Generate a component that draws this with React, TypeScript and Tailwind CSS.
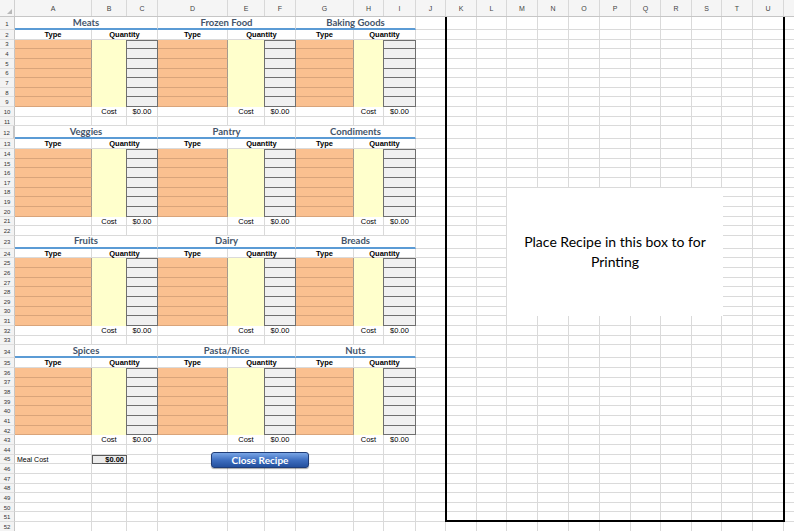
import { clsx } from 'clsx';

type Block = { a: string; b: string; c: string; bc: string; all: string };

const BLOCKS: Block[] = [
  { a: 'w-[77px]', b: 'w-[35px]', c: 'w-[31px]', bc: 'w-[66px]', all: 'w-[143px]' },
  { a: 'w-[70px]', b: 'w-[37px]', c: 'w-[31px]', bc: 'w-[68px]', all: 'w-[138px]' },
  { a: 'w-[58px]', b: 'w-[30px]', c: 'w-[32px]', bc: 'w-[62px]', all: 'w-[120px]' },
];

const LEFT_COLS: [string, string][] = [
  ['A', 'w-[77px]'], ['B', 'w-[35px]'], ['C', 'w-[31px]'],
  ['D', 'w-[70px]'], ['E', 'w-[37px]'], ['F', 'w-[31px]'],
  ['G', 'w-[58px]'], ['H', 'w-[30px]'], ['I', 'w-[32px]'],
];

const RIGHT_COLS: [string, string][] = [
  ['J', 'w-[30px]'], ['K', 'w-[31px]'], ['L', 'w-[30px]'], ['M', 'w-[31px]'],
  ['N', 'w-[31px]'], ['O', 'w-[31px]'], ['P', 'w-[31px]'], ['Q', 'w-[30px]'],
  ['R', 'w-[31px]'], ['S', 'w-[30px]'], ['T', 'w-[31px]'], ['U', 'w-[31px]'],
  ['', 'w-[30px]'],
];

const NAMES = [
  ['Meats', 'Frozen Food', 'Baking Goods'],
  ['Veggies', 'Pantry', 'Condiments'],
  ['Fruits', 'Dairy', 'Breads'],
  ['Spices', 'Pasta/Rice', 'Nuts'],
];

const grid = 'shrink-0 h-full border-r border-b border-[#dadada]';
const center = 'flex items-center justify-center leading-none pt-px';

function BlockCells({ block, kind, name, first }: { block: Block; kind: string; name: string; first: boolean }) {
  if (kind === 'title') {
    return (
      <div className={clsx(block.all, 'shrink-0 h-full flex items-end justify-center pb-px leading-none border-r border-r-[#dadada] border-b-2 border-b-[#5b9bd5] font-["Lato"] font-bold text-[9.5px] text-[#44546a]')}>
        {name}
      </div>
    );
  }
  if (kind === 'sub') {
    return (
      <>
        <div className={clsx(block.a, grid, center, 'font-bold text-[7.5px] text-black')}>Type</div>
        <div className={clsx(block.bc, grid, center, 'font-bold text-[7.5px] text-black')}>Quantity</div>
      </>
    );
  }
  if (kind === 'data') {
    return (
      <>
        <div className={clsx(block.a, 'shrink-0 h-full bg-[#fac090] border-r border-r-[#a59a8e] border-b border-b-[#d9a47a]')} />
        <div className={clsx(block.b, 'shrink-0 h-full bg-[#ffffcc] border-r border-r-[#6f6f6f]')} />
        <div className={clsx(block.c, 'shrink-0 h-full bg-[#f0f0f0] border-r border-b border-[#6f6f6f]', first && 'border-t')} />
      </>
    );
  }
  if (kind === 'cost') {
    return (
      <>
        <div className={clsx(block.a, grid)} />
        <div className={clsx(block.b, grid, center, 'text-[7.5px] text-black')}>Cost</div>
        <div className={clsx(block.c, grid, center, 'text-[7.5px] text-black')}>$0.00</div>
      </>
    );
  }
  return (
    <>
      <div className={clsx(block.a, grid)} />
      <div className={clsx(block.b, grid)} />
      <div className={clsx(block.c, grid)} />
    </>
  );
}

function SheetRow({ r }: { r: number }) {
  const inBlocks = r <= 44;
  const offset = (r - 1) % 11;
  const kind = !inBlocks ? 'blank'
    : offset === 0 ? 'title'
    : offset === 1 ? 'sub'
    : offset <= 8 ? 'data'
    : offset === 9 ? 'cost' : 'blank';
  const names = inBlocks ? NAMES[Math.floor((r - 1) / 11)] : ['', '', ''];

  return (
    <div className={clsx('flex', kind === 'title' ? 'h-[13px]' : 'h-[9.65px]')}>
      <div className={clsx(
        'w-[15px] shrink-0 h-full bg-[#f3f3f3] border-r border-b border-r-[#c6c6c6] border-b-[#dedede] flex items-center justify-center pt-px text-[6px] leading-none text-[#333]',
        r === 12 && 'bg-[#e2e2e2] border-r-2 border-r-[#217346]'
      )}>
        {r}
      </div>
      {r === 45 ? (
        <>
          <div className={clsx('w-[77px]', grid, 'flex items-center pl-[2px] pt-px text-[7px] leading-none text-black')}>Meal Cost</div>
          <div className="w-[35px] shrink-0 h-full bg-[#ececec] border border-[#5a5a5a] flex items-center justify-end pr-[2px] pt-px font-bold text-[7.5px] leading-none text-black">
            $0.00
          </div>
          {LEFT_COLS.slice(2).map(([k, w]) => <div key={k} className={clsx(w, grid)} />)}
        </>
      ) : (
        BLOCKS.map((block, i) => (
          <BlockCells key={i} block={block} kind={kind} name={names[i]} first={offset === 2} />
        ))
      )}
      {RIGHT_COLS.map(([k, w], i) => <div key={i} className={clsx(w, grid)} />)}
    </div>
  );
}

export default function App() {
  const rows = Array.from({ length: 52 }, (_, i) => i + 1);

  return (
    <div className="relative w-[794px] h-[531px] overflow-hidden bg-white font-['Liberation_Sans',Arial,sans-serif]">
      <div className="flex h-[17px] bg-[#f5f5f5] border-b border-[#c6c6c6]">
        <div className="relative w-[15px] shrink-0 h-full border-r border-[#d0d0d0]">
          <div className="absolute right-[2px] bottom-[2px] w-0 h-0 border-l-[5px] border-l-transparent border-b-[5px] border-b-[#b8b8b8]" />
        </div>
        {[...LEFT_COLS, ...RIGHT_COLS].map(([k, w], i) => (
          <div key={i} className={clsx(w, 'shrink-0 h-full border-r border-[#d8d8d8] flex items-center justify-center text-[7px] leading-none text-[#444]')}>
            {k}
          </div>
        ))}
      </div>

      {rows.map((r) => <SheetRow key={r} r={r} />)}

      <div className="absolute left-[445px] top-[17px] w-[340px] h-[505px] border-l-2 border-r-2 border-b-2 border-black" />

      <div className="absolute left-[507px] top-[188px] w-[216px] h-[128px] bg-white flex flex-col items-center justify-center font-['Lato',sans-serif] text-[14px] leading-[20px] text-black">
        <span>Place Recipe in this box to for</span>
        <span>Printing</span>
      </div>

      <button className="absolute left-[211px] top-[452px] w-[98px] h-[16px] rounded-[3px] border border-[#1f3d78] bg-linear-to-b from-[#7aa6e6] via-[#3f6fc0] to-[#24509e] shadow-[0_1px_1px_rgba(0,0,0,0.35)] flex items-center justify-center font-['Lato',sans-serif] font-bold text-[10px] leading-none text-white">
        Close Recipe
      </button>
    </div>
  );
}
